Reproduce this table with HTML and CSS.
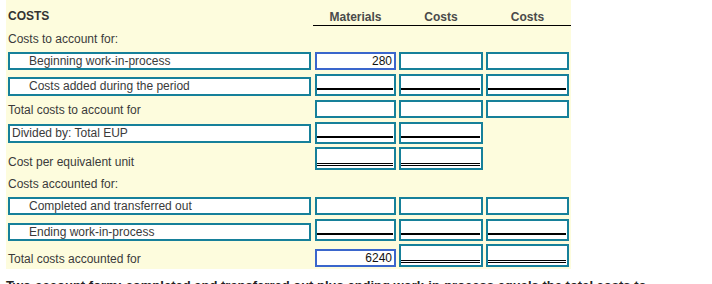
FILE: index.html
```html
<!DOCTYPE html>
<html>
<head>
<meta charset="utf-8">
<link rel="stylesheet" href="styles.css">
</head>
<body>
<div class="sheet">
  <div class="row r-head">
    <div class="title">COSTS</div>
    <div class="heads">
      <div class="hd">Materials</div>
      <div class="hd">Costs</div>
      <div class="hd">Costs</div>
    </div>
  </div>

  <div class="row r-cap">
    <div class="text">Costs to account for:</div>
  </div>

  <div class="row r-18">
    <div class="lbox indent">Beginning work-in-process</div>
    <div class="box input">280</div>
    <div class="box"></div>
    <div class="box"></div>
  </div>

  <div class="row r-22 gap4">
    <div class="lbox tall indent">Costs added during the period</div>
    <div class="box full single"><span class="line"></span></div>
    <div class="box full single"><span class="line"></span></div>
    <div class="box full single"><span class="line"></span></div>
  </div>

  <div class="row r-18 gap4">
    <div class="text low">Total costs to account for</div>
    <div class="box"></div>
    <div class="box"></div>
    <div class="box"></div>
  </div>

  <div class="row r-22 gap4">
    <div class="lbox tall lift">Divided by: Total EUP</div>
    <div class="box full single"><span class="line"></span></div>
    <div class="box full single"><span class="line"></span></div>
  </div>

  <div class="row r-23 gap3">
    <div class="text low">Cost per equivalent unit</div>
    <div class="box full double"><span class="dline"></span></div>
    <div class="box full double"><span class="dline"></span></div>
  </div>

  <div class="row r-cap2">
    <div class="text">Costs accounted for:</div>
  </div>

  <div class="row r-18">
    <div class="lbox indent">Completed and transferred out</div>
    <div class="box"></div>
    <div class="box"></div>
    <div class="box"></div>
  </div>

  <div class="row r-22 gap4">
    <div class="lbox indent">Ending work-in-process</div>
    <div class="box full single"><span class="line"></span></div>
    <div class="box full single"><span class="line"></span></div>
    <div class="box full single"><span class="line"></span></div>
  </div>

  <div class="row r-23 gap3">
    <div class="text low">Total costs accounted for</div>
    <div class="box input">6240</div>
    <div class="box full double"><span class="dline"></span></div>
    <div class="box full double"><span class="dline"></span></div>
  </div>
</div>
<p class="after">Two-account form: completed and transferred out plus ending work-in-process equals the total costs to account for.</p>
</body>
</html>
```

FILE: styles.css
```css
html, body {
  margin: 0;
  padding: 0;
  background: #ffffff;
}

body {
  font-family: "Liberation Sans", Arial, sans-serif;
  font-size: 12px;
  color: #333333;
}

.sheet {
  margin-left: 6px;
  width: 563px;
  padding: 0 0 2px 2px;
  background: #fdfcdd;
}

.row {
  display: grid;
  grid-template-columns: 304px 81px 84px 83px;
  column-gap: 3px;
  align-items: end;
}

.r-head { height: 26px; }
.r-cap  { height: 26px; align-items: center; }
.r-cap2 { height: 27px; align-items: center; }
.r-18 { height: 18px; }
.r-22 { height: 22px; }
.r-23 { height: 23px; }
.gap3 { margin-top: 3px; }
.gap4 { margin-top: 4px; }

.title {
  font-weight: bold;
  line-height: 14px;
  padding-bottom: 3px;
  color: #333333;
}

.heads {
  grid-column: 2 / 5;
  display: grid;
  grid-template-columns: 81px 84px 83px;
  column-gap: 3px;
  margin: 0 -2px;
  padding: 0 2px;
  border-bottom: 1px solid #000000;
}

.hd {
  font-weight: bold;
  text-align: center;
  line-height: 14px;
  padding-bottom: 1px;
  color: #4a4a4a;
}

.text {
  line-height: 14px;
  color: #3a3a3a;
}

.text.low {
  padding-bottom: 1px;
}

.lbox {
  box-sizing: border-box;
  width: 303px;
  height: 18px;
  border: 2px solid #16809a;
  background: #ffffff;
  line-height: 14px;
  padding-left: 2px;
  color: #3a3a3a;
  white-space: nowrap;
}

.lbox.tall { height: 19px; }
.lbox.lift { margin-bottom: 1px; }
.lbox.indent { padding-left: 19px; }

.box {
  box-sizing: border-box;
  height: 18px;
  border: 2px solid #16809a;
  background: #ffffff;
}

.box.full { height: 100%; }

.box.input {
  border-color: #3a66cc;
  text-align: right;
  line-height: 14px;
  padding-right: 2px;
  color: #111111;
}

.box.single,
.box.double {
  display: flex;
  align-items: flex-end;
  padding: 0 1px 0 0;
}

.box.single { padding-bottom: 4px; }
.box.double { padding-bottom: 2px; }

.line {
  flex: 1;
  border-top: 2px solid #000000;
}

.dline {
  flex: 1;
  border-top: 3px double #000000;
}

.after {
  margin: 9px 0 0 6px;
  width: 690px;
  font-size: 13px;
  font-weight: bold;
  line-height: 16px;
  color: #222222;
}
```
